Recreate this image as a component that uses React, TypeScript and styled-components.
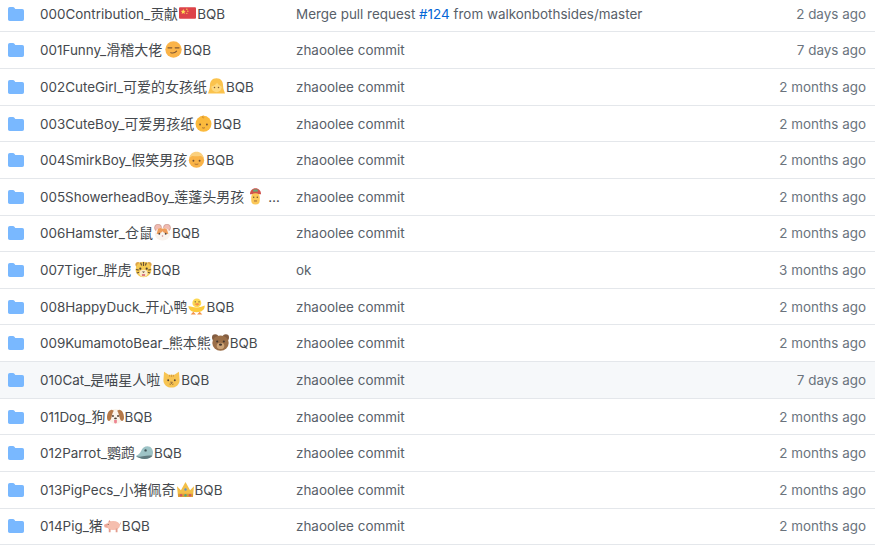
import React from "react";
import styled, { createGlobalStyle } from "styled-components";

const Global = createGlobalStyle`
  html, body { margin: 0; padding: 0; height: 100%; overflow: hidden; background: #fff; }
  body { font-family: Inter, "Noto Sans CJK SC", "Liberation Sans", sans-serif; }
`;

const List = styled.div`
  margin-top: -4.2px;
  display: flex;
  flex-direction: column;
`;

const Row = styled.div<{ $active?: boolean }>`
  height: 36.64px;
  box-sizing: border-box;
  padding: 0 8px;
  display: grid;
  grid-template-columns: 16px 256px 1fr auto;
  align-items: center;
  border-bottom: 1px solid #e4e7eb;
  background: ${(p) => (p.$active ? "#f6f8fa" : "#fff")};
  font-size: 13.45px;
  line-height: 18px;
`;

const FolderIcon = styled.svg`
  width: 16px;
  height: 16px;
  fill: #79b8ff;
  display: block;
`;

const Name = styled.div`
  margin-left: 16px;
  color: #24292e;
  opacity: 0.85;
  white-space: nowrap;
  overflow: hidden;
  text-overflow: ellipsis;
`;

const Cjk = styled.span`
  font-size: 14px;
`;

const Message = styled.div`
  margin-left: 16px;
  color: #586069;
  white-space: nowrap;
`;

const IssueLink = styled.span`
  color: #0366d6;
`;

const Age = styled.div`
  margin-right: 1px;
  color: #6a737d;
  text-align: right;
  white-space: nowrap;
`;

const EmojiSvg = styled.svg<{ $gap?: boolean }>`
  display: inline-block;
  width: 17px;
  height: 17px;
  vertical-align: -3px;
  margin: 0 1px 0 ${(p) => (p.$gap ? "3px" : "1px")};
`;

const Face = ({ c = "#fbb62e" }: { c?: string }) => <circle cx="8" cy="8" r="7.700" fill={c} />;

const emojis: Record<string, React.ReactNode> = {
  flag: (
    <>
      <rect x="0" y="2" width="16" height="11" rx="1" fill="#d8232a" />
      <path d="M4 3.800l.7 1.700 1.700.1-1.300 1.100.4 1.700L4 7.500l-1.500.9.400-1.700-1.300-1.100 1.700-.1z" fill="#ffd93b" />
      <circle cx="7.400" cy="4" r=".6" fill="#ffd93b" />
      <circle cx="8.300" cy="5.800" r=".6" fill="#ffd93b" />
      <circle cx="7.400" cy="7.800" r=".6" fill="#ffd93b" />
    </>
  ),
  smirk: (
    <>
      <Face c="#fba82a" />
      <path d="M2.800 6.400h3.600M9.600 6.400h3.600" stroke="#6b3a10" strokeWidth="1.100" strokeLinecap="round" />
      <path d="M5.500 11c2 .6 4 .2 5.400-1.400" stroke="#6b3a10" strokeWidth="1.100" fill="none" strokeLinecap="round" />
    </>
  ),
  girl: (
    <>
      <path d="M8 .3c4.300 0 6.200 3 6.200 7.200 0 2.700 1 4.300 1.800 7H0c.8-2.700 1.800-4.300 1.800-7C1.800 3.300 3.700.3 8 .3z" fill="#fbb92f" />
      <circle cx="8" cy="8.700" r="4.800" fill="#fdd36a" />
      <path d="M3.200 7.800C6 7.200 8 5.800 8.500 4.200c1 2 2.500 3 4.300 3.600L11.500 3 8 2 4.500 3z" fill="#fbb92f" />
      <circle cx="6.100" cy="9" r=".7" fill="#6b3a10" />
      <circle cx="9.900" cy="9" r=".7" fill="#6b3a10" />
    </>
  ),
  baby: (
    <>
      <circle cx="8" cy="8.300" r="7.500" fill="#fbae1c" />
      <path d="M8 .9c-1 0-1.500.8-1 1.500.7.6 1.600.3 1.500-.3" fill="none" stroke="#c97c0c" strokeWidth=".9" />
      <circle cx="4.800" cy="9" r=".9" fill="#5a3210" />
      <circle cx="11.200" cy="9" r=".9" fill="#5a3210" />
      <path d="M6.800 12c.8.400 1.600.4 2.400 0" stroke="#8e4d0c" strokeWidth=".9" fill="none" />
    </>
  ),
  boy: (
    <>
      <circle cx="8" cy="8.600" r="7.200" fill="#f9a627" />
      <path d="M1 7.500C1.500 3 4.500.6 8 .6s6.500 2.400 7 6.900c-1-1.700-2.200-2.500-3.500-2.700C9 5.100 6 5.100 4.500 4.800 3 5.100 2 6 1 7.500z" fill="#fbc867" />
      <circle cx="5.100" cy="9.200" r=".9" fill="#5a3210" />
      <circle cx="10.900" cy="9.200" r=".9" fill="#5a3210" />
      <path d="M6.300 12.200c1.100.5 2.300.5 3.400 0" stroke="#8e4d0c" strokeWidth=".9" fill="none" />
    </>
  ),
  shower: (
    <>
      <path d="M2.800 5.800C2.800 2.500 5 .2 8 .2s5.200 2.300 5.200 5.600z" fill="#c8352f" />
      <path d="M5.800 1.400h4.400v2H5.800z" fill="#4c9b63" />
      <rect x="4" y="5" width="8" height="10.500" rx="3.800" fill="#fbbf3c" />
      <circle cx="6.300" cy="8.700" r=".7" fill="#5a3210" />
      <circle cx="9.700" cy="8.700" r=".7" fill="#5a3210" />
      <path d="M6.600 12.200h2.800" stroke="#8e4d0c" strokeWidth=".9" />
    </>
  ),
  hamster: (
    <>
      <circle cx="3.800" cy="3.500" r="3.300" fill="#eeb0a4" stroke="#b97a70" strokeWidth=".6" />
      <circle cx="12.200" cy="3.500" r="3.300" fill="#eeb0a4" stroke="#b97a70" strokeWidth=".6" />
      <ellipse cx="8" cy="9.500" rx="7.300" ry="6" fill="#f8f1ea" />
      <path d="M3.800 4.500c1.500-1 3-1 4.200 0 1.500-.8 3-.6 4.200.6l1.300 4.200C11 9.500 9 8 8 6.800 7 8 5 9.500 2.500 9.300z" fill="#ec8c3f" />
      <circle cx="5" cy="9.200" r=".9" fill="#3a2a20" />
      <circle cx="11" cy="9.200" r=".9" fill="#3a2a20" />
      <circle cx="8" cy="11.200" r=".7" fill="#c6737a" />
    </>
  ),
  tiger: (
    <>
      <circle cx="2.800" cy="3.300" r="2.400" fill="#d9952a" />
      <circle cx="13.200" cy="3.300" r="2.400" fill="#d9952a" />
      <ellipse cx="8" cy="8" rx="7.500" ry="7.200" fill="#f4c136" />
      <path d="M8 1v3.600M5.300 1.500l.9 2.700M10.700 1.500l-.9 2.700M1 8l2.500.6M15 8l-2.500.6M1.600 11.300l2.400-.7M14.400 11.300l-2.400-.7" stroke="#4e3210" strokeWidth="1.100" />
      <ellipse cx="8" cy="11.500" rx="3.800" ry="3.200" fill="#faeac4" />
      <circle cx="5" cy="7.200" r="1" fill="#2d1d0d" />
      <circle cx="11" cy="7.200" r="1" fill="#2d1d0d" />
      <path d="M6.600 9.800h2.800L8 11.400z" fill="#4a2b15" />
      <path d="M6.500 12.300h3v1.800h-3z" fill="#d8606a" />
    </>
  ),
  chick: (
    <>
      <circle cx="8.300" cy="4.600" r="4.200" fill="#fdd234" />
      <path d="M.3 7.500l3.200.8c2.500 1 6.500 1 9 0l3.200-1.300c.3 3.800-2.700 6.300-7.700 6.300S.8 11 .3 7.500z" fill="#fcc21b" />
      <path d="M5.800 5.600L8.800 4.600 11.200 5.600 8.800 7.200z" fill="#f3802a" />
      <circle cx="6.800" cy="3.600" r=".6" fill="#2d1d0d" />
      <circle cx="10.400" cy="3.600" r=".6" fill="#2d1d0d" />
      <path d="M5 13L2.500 15.500h5zM11 13l-2.500 2.500h5z" fill="#f3802a" />
    </>
  ),
  bear: (
    <>
      <circle cx="3" cy="3.200" r="3" fill="#6e4120" />
      <circle cx="13" cy="3.200" r="3" fill="#6e4120" />
      <ellipse cx="8" cy="8.500" rx="7.700" ry="7.200" fill="#8a5629" />
      <ellipse cx="8" cy="11.200" rx="3.600" ry="2.900" fill="#c4945f" />
      <circle cx="4.900" cy="7" r="1" fill="#24150a" />
      <circle cx="11.100" cy="7" r="1" fill="#24150a" />
      <ellipse cx="8" cy="10" rx="1.500" ry="1" fill="#24150a" />
    </>
  ),
  cat: (
    <>
      <path d="M1 .6l4.300 2.900h5.400L15 .6l.6 8c0 4.300-3.600 7-7.600 7s-7.600-2.700-7.600-7z" fill="#f8bb35" />
      <path d="M8 3.500v2.200M6 3.700l.4 1.800M10 3.700l-.4 1.800" stroke="#c9851f" strokeWidth=".8" />
      <circle cx="4.900" cy="8.700" r=".9" fill="#3a2510" />
      <circle cx="11.100" cy="8.700" r=".9" fill="#3a2510" />
      <path d="M7.100 10.500h1.800L8 11.400zM6.100 12.300c.9.600 1.300.3 1.900-.8.600 1.100 1 1.400 1.900.8" fill="none" stroke="#6e4416" strokeWidth=".7" />
    </>
  ),
  dog: (
    <>
      <circle cx="8" cy="8" r="7" fill="#fbf3e8" />
      <path d="M4.500 1.600C2 1.600 0 5 0 9c0 2 .8 3.200 1.900 3.200 1.300 0 2.100-2.100 2.600-4.700.5-2 1-3.800 2-5z" fill="#a9622a" />
      <path d="M11.500 1.600C14 1.600 16 5 16 9c0 2-.8 3.200-1.900 3.200-1.300 0-2.100-2.100-2.600-4.700-.5-2-1-3.800-2-5z" fill="#a9622a" />
      <circle cx="5.600" cy="7.500" r=".9" fill="#2d1d0d" />
      <circle cx="10.400" cy="7.500" r=".9" fill="#2d1d0d" />
      <ellipse cx="8" cy="9.800" rx="1.300" ry=".9" fill="#2d1d0d" />
      <path d="M6.700 11.200h2.600v2.300c0 1.400-2.600 1.400-2.600 0z" fill="#ea6f7f" />
    </>
  ),
  parrot: (
    <>
      <path d="M16 8c0 3.800-3.500 6-8 6-3.200 0-6.200-1.100-8-2.700C2.200 10 3.700 9 4.800 6.500 5.900 3.800 8 2 10.800 2 14 2 16 4.800 16 8z" fill="#8db9bd" />
      <path d="M0 11.300c2.200.7 4.300.8 6.500.3 3.200-.7 6.300-1 9.200-.5C14.300 13 11.500 14 8 14c-3.200 0-6.200-1.100-8-2.700z" fill="#46646a" />
      <circle cx="9" cy="6" r="1.100" fill="#1f3538" />
    </>
  ),
  crown: (
    <>
      <path d="M1 15L0 5l3.700 3.700L8 1l4.300 7.700L16 5l-1 10z" fill="#f0b429" />
      <path d="M1 12h14v3H1z" fill="#d68a14" />
      <circle cx="3.800" cy="13.400" r="1.100" fill="#c83a4b" />
      <circle cx="8" cy="13.400" r="1.100" fill="#2f9e6a" />
      <circle cx="12.200" cy="13.400" r="1.100" fill="#c83a4b" />
      <circle cx="8" cy="8" r="1.100" fill="#3f7fc4" />
    </>
  ),
  pig: (
    <>
      <ellipse cx="8.600" cy="8" rx="6.400" ry="4.300" fill="#f4b3a0" />
      <path d="M2.800 6L0 7.300l.5 2.400 3 .7z" fill="#eb9886" />
      <path d="M4 4.400l1.300-1.500L6.200 5z" fill="#df8a78" />
      <path d="M4.500 11v3.400h1.700v-2.900zM11 11v3.400h1.700v-3.900z" fill="#df8a78" />
      <path d="M14.700 7c1.300 0 1.300-1.600.4-1.600" stroke="#df8a78" fill="none" strokeWidth=".8" />
      <circle cx="3.900" cy="7" r=".5" fill="#3a2510" />
    </>
  ),
};

type Item = { latin: string; cjk: string; emoji: string; gap?: boolean; message?: React.ReactNode; age: string };

const items: Item[] = [
  {
    latin: "000Contribution_",
    cjk: "贡献",
    emoji: "flag",
    age: "2 days ago",
    message: (
      <>
        Merge pull request <IssueLink>#124</IssueLink> from walkonbothsides/master
      </>
    ),
  },
  { latin: "001Funny_", cjk: "滑稽大佬", emoji: "smirk", gap: true, age: "7 days ago" },
  { latin: "002CuteGirl_", cjk: "可爱的女孩纸", emoji: "girl", age: "2 months ago" },
  { latin: "003CuteBoy_", cjk: "可爱男孩纸", emoji: "baby", age: "2 months ago" },
  { latin: "004SmirkBoy_", cjk: "假笑男孩", emoji: "boy", age: "2 months ago" },
  { latin: "005ShowerheadBoy_", cjk: "莲蓬头男孩", emoji: "shower", gap: true, age: "2 months ago" },
  { latin: "006Hamster_", cjk: "仓鼠", emoji: "hamster", age: "2 months ago" },
  { latin: "007Tiger_", cjk: "胖虎", emoji: "tiger", gap: true, age: "3 months ago", message: "ok" },
  { latin: "008HappyDuck_", cjk: "开心鸭", emoji: "chick", age: "2 months ago" },
  { latin: "009KumamotoBear_", cjk: "熊本熊", emoji: "bear", age: "2 months ago" },
  { latin: "010Cat_", cjk: "是喵星人啦", emoji: "cat", gap: true, age: "7 days ago" },
  { latin: "011Dog_", cjk: "狗", emoji: "dog", age: "2 months ago" },
  { latin: "012Parrot_", cjk: "鹦鹉", emoji: "parrot", age: "2 months ago" },
  { latin: "013PigPecs_", cjk: "小猪佩奇", emoji: "crown", age: "2 months ago" },
  { latin: "014Pig_", cjk: "猪", emoji: "pig", age: "2 months ago" },
];

export default function App() {
  return (
    <>
      <Global />
      <List>
        {items.map((it, i) => (
          <Row key={it.latin} $active={i === 10}>
            <FolderIcon viewBox="0 0 16 16" aria-hidden="true">
              <path d="M1.750 1A1.750 1.750 0 000 2.750v10.500C0 14.216.784 15 1.750 15h12.500A1.750 1.750 0 0016 13.250v-8.500A1.750 1.750 0 0014.250 3H7.500a.25.25 0 01-.2-.1l-.9-1.200C6.070 1.260 5.550 1 5 1H1.750z" />
            </FolderIcon>
            <Name>
              {it.latin}
              <Cjk>{it.cjk}</Cjk>
              <EmojiSvg viewBox="0 0 16 16" $gap={it.gap}>{emojis[it.emoji]}</EmojiSvg>
              BQB
            </Name>
            <Message>{it.message ?? "zhaoolee commit"}</Message>
            <Age>{it.age}</Age>
          </Row>
        ))}
      </List>
    </>
  );
}
